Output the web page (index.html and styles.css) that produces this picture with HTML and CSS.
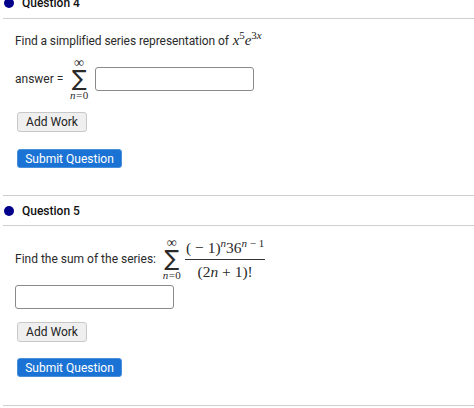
FILE: index.html
```html
<!DOCTYPE html>
<html lang="en">
<head>
    <meta charset="UTF-8">
    <meta name="viewport" content="width=device-width, initial-scale=1.0">
    <title>Questions</title>
    <link rel="stylesheet" href="styles.css">
</head>
<body>

    <!-- Question 4 -->
    <div class="question q4">
        <div class="question-head">
            <span class="dot"></span>
            <span class="question-title">Question 4</span>
        </div>
        <div class="question-body">
            <p class="prompt">Find a simplified series representation of
                <span class="math"><i>x</i><sup>5</sup><i>e</i><sup>3<i>x</i></sup></span>
            </p>
            <div class="answer-row">
                <span>answer =</span>
                <span class="sum">
                    <span class="limit infinity">∞</span>
                    <span class="sigma">∑</span>
                    <span class="limit"><i>n</i>=0</span>
                </span>
                <input type="text" class="answer">
            </div>
            <button class="btn-work">Add Work</button>
            <button class="btn-submit">Submit Question</button>
        </div>
    </div>

    <!-- Question 5 -->
    <div class="question q5">
        <div class="question-head">
            <span class="dot"></span>
            <span class="question-title">Question 5</span>
        </div>
        <div class="question-body">
            <div class="series-row">
                <span>Find the sum of the series:</span>
                <span class="sum">
                    <span class="limit infinity">∞</span>
                    <span class="sigma">∑</span>
                    <span class="limit"><i>n</i>=0</span>
                </span>
                <span class="fraction">
                    <span class="numerator">( − 1)<sup><i>n</i></sup>36<sup><i>n</i> − 1</sup></span>
                    <span class="denominator">(2<i>n</i> + 1)!</span>
                </span>
            </div>
            <input type="text" class="answer">
            <button class="btn-work">Add Work</button>
            <button class="btn-submit">Submit Question</button>
        </div>
    </div>

</body>
</html>
```

FILE: styles.css
```css
/* Global Reset */
* {
    margin: 0;
    padding: 0;
    box-sizing: border-box;
}

html {
    height: 408px;
    overflow: hidden;
}

body {
    font-family: 'Roboto', sans-serif;
    font-size: 12px;
    background-color: white;
    color: #2a2a2a;
    padding-left: 3px;
    margin-top: -12px; /* top of question 4 is scrolled off */
}

/* Question Header */
.question-head {
    height: 31px;
    display: flex;
    align-items: center;
    border-top: 1px solid #cfcfcf;
    border-bottom: 1px solid #cfcfcf;
}

.q4 .question-head {
    border-top: none;
}

.dot {
    width: 10px;
    height: 10px;
    border-radius: 50%;
    background: #00008b;
    margin-left: 1px;
}

.question-title {
    margin-left: 8px;
    font-weight: 500;
    color: #111;
}

/* Question Body */
.question-body {
    padding-left: 12px;
    display: flex;
    flex-direction: column;
    align-items: flex-start;
}

.q4 .question-body {
    height: 176px;
    padding-top: 12px;
}

.q5 .question-body {
    height: 180px;
    padding-top: 10px;
    border-bottom: 1px solid #cfcfcf;
}

.prompt {
    height: 18px;
    line-height: 18px;
    letter-spacing: -0.08px;
}

.math {
    font-family: 'Liberation Serif', serif;
    font-size: 15px;
    color: #222;
    margin-left: 1px;
}

.math sup {
    font-size: 11px;
    line-height: 0;
}

/* Sum Symbol */
.sum {
    display: inline-flex;
    flex-direction: column;
    align-items: center;
    font-family: 'Liberation Serif', serif;
    width: 22px;
}

.limit {
    font-size: 11px;
    line-height: 10px;
    letter-spacing: 0.5px;
}

.infinity {
    font-size: 14px;
}

.sigma {
    font-family: 'DejaVu Sans', sans-serif;
    font-size: 22px;
    line-height: 22px;
}

.answer-row {
    display: flex;
    align-items: center;
    gap: 5px;
    margin-top: 9px;
    height: 42px;
}

.series-row {
    display: flex;
    align-items: center;
    gap: 5px;
    height: 46px;
}

.answer {
    width: 159px;
    height: 24px;
    border: 1px solid #8a8a8a;
    border-radius: 3px;
    background: white;
}

.series-row + .answer {
    margin-top: 3px;
}

/* Fraction */
.fraction {
    display: inline-flex;
    flex-direction: column;
    align-items: center;
    font-family: 'Liberation Serif', serif;
    font-size: 15.5px;
    margin-left: -3px;
}

.numerator {
    padding: 0 1px 3px;
    border-bottom: 1px solid #333;
    line-height: 17px;
}

.numerator sup {
    font-size: 11px;
    line-height: 0;
}

.denominator {
    padding-top: 3px;
    line-height: 17px;
}

/* Button Styles */
button {
    font-family: inherit;
    font-size: 12px;
    border-radius: 3px;
    cursor: pointer;
}

.btn-work {
    width: 70px;
    height: 20px;
    margin-top: 12px;
    margin-left: 2px;
    background: #efefef;
    color: #222;
    border: 1px solid #c8c8c8;
}

.q5 .btn-work {
    margin-top: 13px;
}

.btn-submit {
    width: 105px;
    height: 19px;
    margin-top: 17px;
    margin-left: 2px;
    background: #1a73d4;
    color: white;
    border: 1px solid #4a90d9;
}

.q5 .btn-submit {
    margin-top: 16px;
}
```
